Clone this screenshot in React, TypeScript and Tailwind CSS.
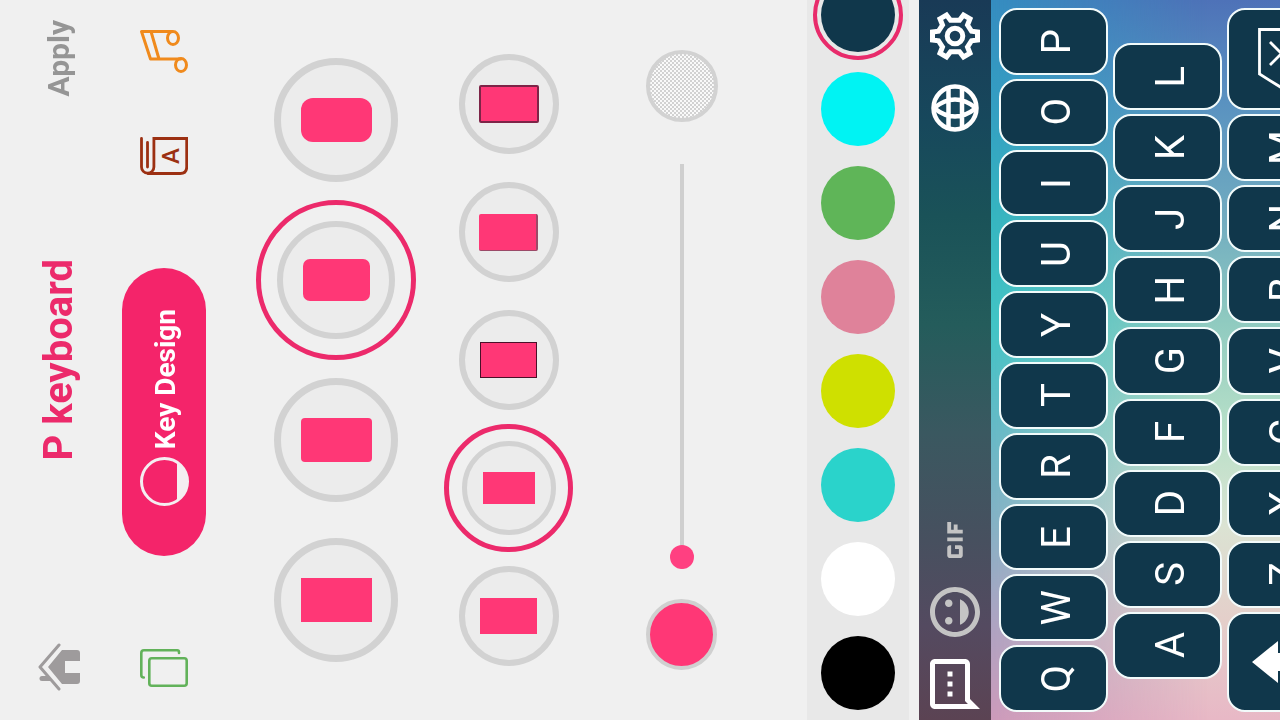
import React from "react";
import { MdGif, MdMood, MdOutlineSms } from "react-icons/md";

// The whole app is turned a quarter to the left, so every label runs upwards.
const Upright = ({
  className = "",
  children,
}: {
  className?: string;
  children: React.ReactNode;
}) => (
  <span
    className={`block rotate-180 whitespace-nowrap [writing-mode:vertical-rl] ${className}`}
  >
    {children}
  </span>
);

const HomeIcon = () => (
  <svg width="42" height="48" viewBox="0 0 42 48" fill="none">
    <path d="M21 2 2 24l19 22" stroke="#9e9b9c" strokeWidth="3" strokeLinejoin="round" strokeLinecap="round" />
    <path d="M4 33h6l4 5H4a2.5 2.5 0 0 1 0-5z" fill="#9e9b9c" />
    <path d="M10 24 24 7h15q3 0 3 3v8H27v12h15v8q0 3-3 3H24z" fill="#9e9b9c" />
  </svg>
);

const MusicIcon = () => (
  <svg width="50" height="46" viewBox="0 0 50 46" fill="none" stroke="#f08a1c" strokeWidth="3" strokeLinejoin="round">
    <path d="M34 2.5H2.5L11.500 30h31M12 2.500l8 27.500" />
    <ellipse cx="34" cy="9" rx="5.500" ry="6.500" />
    <ellipse cx="42" cy="36" rx="5.500" ry="6.500" />
  </svg>
);

const BookIcon = () => (
  <svg width="48" height="38" viewBox="0 0 48 38" fill="none" stroke="#9c3012" strokeWidth="2.8" strokeLinecap="round">
    <path d="M1.500 1.500V30a6.200 6.200 0 0 0 12.400 0V1.500h32.800V30q0 6.500-6.500 6.500H7.500" />
    <path d="M7.500 5.500v24.500" />
    <text
      transform="translate(39 19) rotate(-90)"
      textAnchor="middle"
      fontSize="24"
      fontFamily="Roboto, sans-serif"
      fontWeight="500"
      fill="#9c3012"
      stroke="none"
    >
      A
    </text>
  </svg>
);

const ContrastIcon = () => (
  <svg width="49" height="49" viewBox="0 0 49 49" fill="none">
    <circle cx="24.500" cy="24.500" r="23" stroke="#f4eef1" strokeWidth="3" />
    <path d="M37 5a23 23 0 0 1 0 39z" fill="#f4eef1" />
  </svg>
);

const LayersIcon = () => (
  <svg width="48" height="38" viewBox="0 0 48 38" fill="none" stroke="#62b25a" strokeWidth="2.6" strokeLinecap="round">
    <path d="M39 4V3q0-1.700-1.700-1.700H4Q1.300 1.300 1.300 4v22q0 2.500 2.500 2.500" />
    <rect x="9.300" y="9.300" width="37.400" height="27.400" rx="2.500" />
  </svg>
);

const GearIcon = () => (
  <svg width="50" height="50" viewBox="-25 -25 50 50" fill="none" stroke="#fff" strokeWidth="5">
    <path d="m-15-17.200 6.500-3.800 4 5.300h9l4-5.300 6.500 3.800-2.500 6.200 4 6.200 6 .8v8l-6 .8-4 6.200 2.500 6.200L8.500 21l-4-5.300h-9l-4 5.300-6.500-3.800 2.500-6.200-4-6.200-6-.8v-8l6-.8 4-6.200z" />
    <circle r="7.800" />
  </svg>
);

const GlobeIcon = () => (
  <svg width="48" height="48" viewBox="0 0 48 48" fill="none" stroke="#fff" strokeWidth="4.500">
    <circle cx="24" cy="24" r="21.500" />
    <path d="M17.500 4v40M31 4v40M3 24q21-17 42 0M3 24q21 17 42 0" />
  </svg>
);

const BackspaceIcon = () => (
  <svg width="48" height="62" viewBox="0 0 48 62" fill="none" stroke="#fff" strokeWidth="2.800">
    <path d="M1.500 1.500h45V46L24 60 1.500 46z" />
    <path d="m12 14 23 23M35 14 12 37" />
  </svg>
);

const ShiftIcon = () => (
  <svg width="60" height="42" viewBox="0 0 60 42" fill="#fff">
    <path d="M0 21 26 0v12h34v18H26v12z" />
  </svg>
);

const shapes = [
  { name: "Extra rounded", fill: "h-11 w-[71px] rounded-[12px]" },
  { name: "Rounded", fill: "h-[42px] w-[67px] rounded-[7px]", selected: true },
  { name: "Slightly rounded", fill: "h-11 w-[71px] rounded-[4px]" },
  { name: "Square", fill: "h-11 w-[71px]" },
];

const borders = [
  { name: "Thick border", fill: "h-[38px] w-[60px] rounded-[2px] border-2 border-[#7d2447]" },
  { name: "Shadow", fill: "h-[37px] w-[59px] rounded-[2px] border-r-2 border-b border-[#9b4a68]" },
  { name: "Thin border", fill: "h-9 w-[57px] border border-[#4a1029]" },
  { name: "No border", fill: "h-8 w-[52px]", selected: true },
  { name: "Light border", fill: "h-9 w-[57px]" },
];

const colors = [
  { name: "Navy", fill: "bg-[#10374b] outline-4 outline-offset-4 outline-[#e82b6b]" },
  { name: "Cyan", fill: "bg-[#00f3f3]" },
  { name: "Green", fill: "bg-[#5fb558]" },
  { name: "Pink", fill: "bg-[#df829a]" },
  { name: "Lime", fill: "bg-[#cfe000]" },
  { name: "Turquoise", fill: "bg-[#2ad3cb]" },
  { name: "White", fill: "bg-white" },
  { name: "Black", fill: "bg-black" },
];

const Key = ({
  label,
  className = "flex-1",
  children,
}: {
  label: string;
  className?: string;
  children?: React.ReactNode;
}) => (
  <button
    aria-label={label}
    className={`flex w-[109px] items-center justify-center rounded-[18px] border-2 border-[#f2fbfb] bg-[#10374b] text-[40px] leading-none text-white ${className}`}
  >
    {children ?? <Upright className="pr-1.5">{label}</Upright>}
  </button>
);

const Header = () => (
  <header className="mr-1 grid w-[118px] shrink-0 grid-rows-[1fr_auto_1fr] justify-items-center py-5">
    <button className="self-start text-[30px] leading-8 font-bold text-[#959595]">
      <Upright>Apply</Upright>
    </button>
    <h1 className="text-[40px] leading-[48px] font-bold text-[#ec2a6b]">
      <Upright>P keyboard</Upright>
    </h1>
    <button aria-label="Home" className="self-end pb-[9px]">
      <HomeIcon />
    </button>
  </header>
);

const Tabs = () => (
  <nav className="flex w-[84px] shrink-0 flex-col">
    <button aria-label="Sound" className="flex h-[104px] items-center justify-center">
      <MusicIcon />
    </button>
    <button aria-label="Font" className="flex h-[104px] items-center justify-center">
      <BookIcon />
    </button>
    <button className="my-[60px] flex flex-1 flex-col items-center justify-end gap-2 rounded-full bg-[#f4246a] pb-[50px] text-[28px] leading-8 font-bold text-white">
      <Upright className="pr-[3px]">Key Design</Upright>
      <ContrastIcon />
    </button>
    <button aria-label="Background" className="flex h-[104px] items-center justify-center">
      <LayersIcon />
    </button>
  </nav>
);

const ShapePicker = () => (
  <section aria-label="Key shape" className="ml-[50px] grid w-40 shrink-0 auto-rows-fr py-10">
    {shapes.map((s) => (
      <button
        key={s.name}
        aria-label={s.name}
        aria-pressed={!!s.selected}
        className={`flex items-center justify-center rounded-full ${s.selected ? "border-5 border-[#ec2a6b]" : ""}`}
      >
        <span
          className={`flex items-center justify-center rounded-full border-[#d2d2d2] bg-[#ececec] ${s.selected ? "size-[118px] border-[6px]" : "size-[124px] border-[7px]"}`}
        >
          <span className={`bg-[#ff3776] ${s.fill}`} />
        </span>
      </button>
    ))}
  </section>
);

const BorderPicker = () => (
  <section aria-label="Key border" className="ml-7 grid w-[129px] shrink-0 auto-rows-fr py-10">
    {borders.map((b) => (
      <button
        key={b.name}
        aria-label={b.name}
        aria-pressed={!!b.selected}
        className={`flex items-center justify-center rounded-full ${b.selected ? "border-5 border-[#ec2a6b]" : ""}`}
      >
        <span
          className={`flex items-center justify-center rounded-full border-[#d2d2d2] bg-[#ececec] ${b.selected ? "size-[94px] border-5" : "size-[100px] border-[6px]"}`}
        >
          <span className={`bg-[#ff3776] ${b.fill}`} />
        </span>
      </button>
    ))}
  </section>
);

const OpacitySlider = () => (
  <section className="ml-[72px] flex w-[73px] shrink-0 flex-col items-center py-[50px]">
    <span className="size-[72px] rounded-full border-4 border-[#d2d2d2] bg-[repeating-conic-gradient(#d2d2d2_0_25%,#fafafa_0_50%)] bg-[length:4px_4px]" />
    <input
      type="range"
      aria-label="Key opacity"
      defaultValue={0}
      className="mt-[42px] mb-[30px] min-h-0 w-6 flex-1 appearance-none bg-[linear-gradient(#cfcfcf,#cfcfcf)] bg-[length:4px_100%] bg-center bg-no-repeat [direction:rtl] [writing-mode:vertical-lr] [&::-webkit-slider-thumb]:size-6 [&::-webkit-slider-thumb]:appearance-none [&::-webkit-slider-thumb]:rounded-full [&::-webkit-slider-thumb]:bg-[#ff4081]"
    />
    <span className="size-[71px] rounded-full border-4 border-[#d0d0d0] bg-[#ff3776]" />
  </section>
);

const Palette = () => (
  <section
    aria-label="Key color"
    className="ml-[89px] flex w-[102px] shrink-0 flex-col items-center justify-end gap-5 overflow-hidden bg-[#e8e8e8] pb-2.5"
  >
    {colors.map((c) => (
      <button key={c.name} aria-label={c.name} className={`size-[74px] shrink-0 rounded-full ${c.fill}`} />
    ))}
  </section>
);

const tool = "flex h-[72px] w-[72px] shrink-0 items-center justify-center";

const Toolbar = () => (
  <div className="relative flex w-[72px] shrink-0 flex-col bg-[linear-gradient(#193a56,#17485c_17%,#1a5258_30%,#245c5b_45%,#3a5860_60%,#47505f_75%,#544a60_87%,#5b4353)] text-white">
    <button aria-label="Settings" className={tool}>
      <GearIcon />
    </button>
    <button aria-label="Language" className={tool}>
      <GlobeIcon />
    </button>
    <button aria-label="GIF" className={`${tool} mt-auto text-[#c4c4c4]`}>
      <MdGif size={62} className="-rotate-90" />
    </button>
    <button aria-label="Emoji" className={`${tool} text-[#c4c4c4]`}>
      <MdMood size={60} className="-rotate-90" />
    </button>
    <button aria-label="Messages" className={tool}>
      <MdOutlineSms size={60} className="-rotate-90" />
    </button>
  </div>
);

const Keyboard = () => (
  <section
    aria-label="Keyboard preview"
    className="relative ml-2.5 flex min-w-0 flex-1 overflow-hidden bg-[linear-gradient(#4e72b8,#5890c0_13%,#70abc0_30%,#90cbc0_45%,#b8e0c8_60%,#dbe3d3_73%,#e4cfca_86%,#e8b8c6)]"
  >
    {/* cooler left side of the wallpaper, fading to the right */}
    <div className="absolute inset-0 bg-[linear-gradient(#358dc0,#339fc2_15%,#35b5c0_30%,#40c4c5_45%,#66b8c6_60%,#84b0c4_73%,#a8a4c2_85%,#cc9aba)] [mask-image:linear-gradient(to_right,black_20%,transparent_80%)]" />
    <Toolbar />
    <div className="relative flex gap-[5px] pl-2">
      <div className="flex flex-col gap-1 py-2">
        {[..."POIUYTREWQ"].map((k) => (
          <Key key={k} label={k} />
        ))}
      </div>
      <div className="flex flex-col gap-1 pt-[43px] pb-[41px]">
        {[..."LKJHGFDSA"].map((k) => (
          <Key key={k} label={k} />
        ))}
      </div>
      <div className="flex flex-col gap-1 py-2">
        <Key label="Backspace" className="h-[102px]">
          <BackspaceIcon />
        </Key>
        {[..."MNBVCXZ"].map((k) => (
          <Key key={k} label={k} />
        ))}
        <Key label="Shift" className="h-[100px]">
          <ShiftIcon />
        </Key>
      </div>
    </div>
  </section>
);

const App = () => {
  return (
    <main className="flex h-screen w-full overflow-hidden bg-[#f0f0f0] font-['Roboto',sans-serif]">
      <Header />
      <Tabs />
      <ShapePicker />
      <BorderPicker />
      <OpacitySlider />
      <Palette />
      <Keyboard />
    </main>
  );
};

export default App;
